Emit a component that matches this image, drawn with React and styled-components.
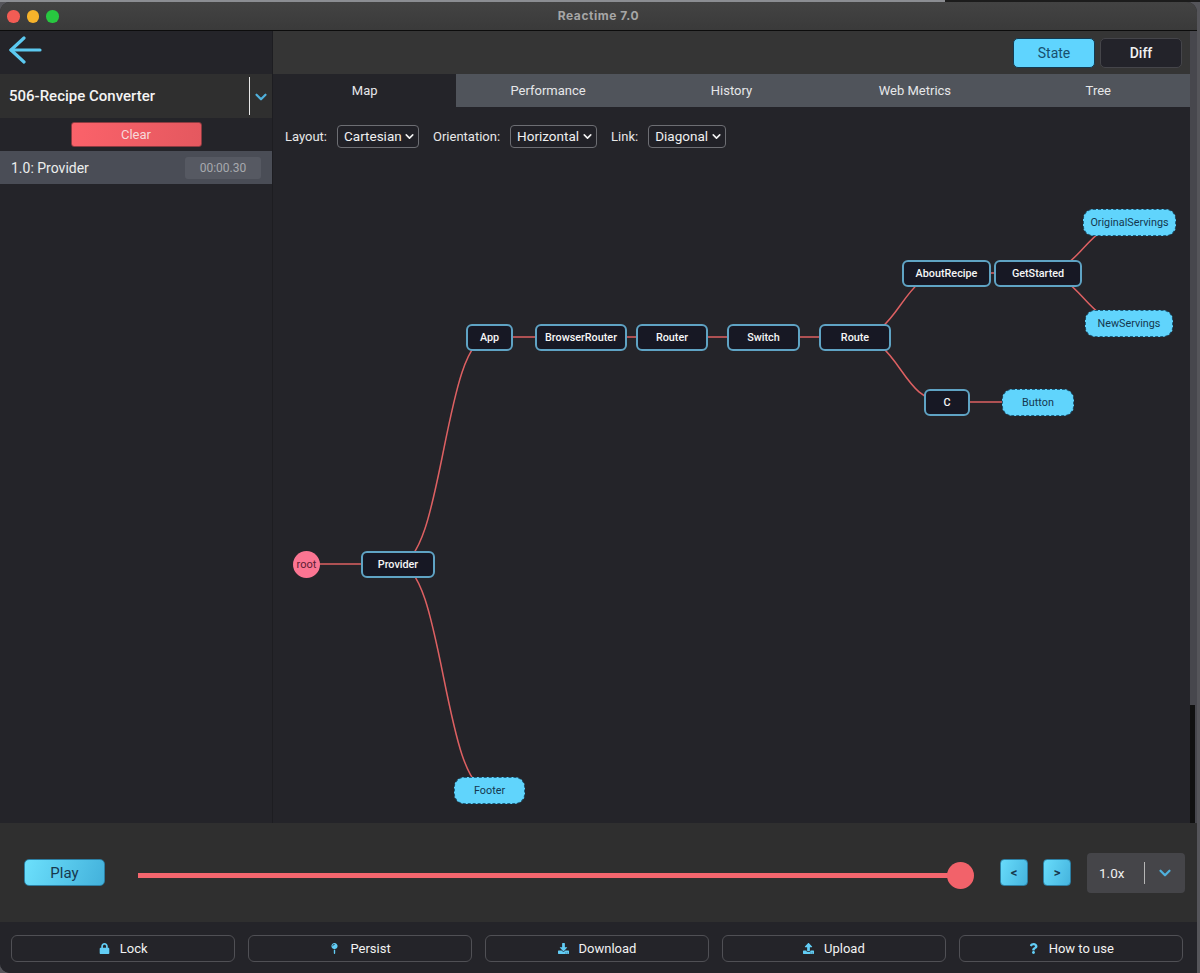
import React from "react";
import styled, { createGlobalStyle } from "styled-components";
import { ChevronDown } from "lucide-react";
import { FaLock, FaMapPin, FaDownload, FaUpload, FaQuestion } from "react-icons/fa";

const MAP_X = 273;
const MAP_Y = 158;

const nodes = [
  { name: "Provider", x: 361, y: 551, w: 74 },
  { name: "App", x: 466, y: 324, w: 47 },
  { name: "BrowserRouter", x: 535, y: 324, w: 92 },
  { name: "Router", x: 636, y: 324, w: 72 },
  { name: "Switch", x: 727, y: 324, w: 73 },
  { name: "Route", x: 819, y: 324, w: 72 },
  { name: "AboutRecipe", x: 902, y: 260, w: 89 },
  { name: "GetStarted", x: 994, y: 260, w: 88 },
  { name: "C", x: 924, y: 389, w: 46 },
  { name: "OriginalServings", x: 1083, y: 209, w: 93, leaf: true },
  { name: "NewServings", x: 1085, y: 310, w: 88, leaf: true },
  { name: "Button", x: 1002, y: 389, w: 72, leaf: true },
  { name: "Footer", x: 454, y: 777, w: 71, leaf: true },
];

const links = [
  [306, 564, 398, 564],
  [398, 564, 489, 337],
  [398, 564, 489, 790],
  [489, 337, 581, 337],
  [581, 337, 672, 337],
  [672, 337, 763, 337],
  [763, 337, 855, 337],
  [855, 337, 946, 273],
  [855, 337, 946, 402],
  [946, 273, 1038, 273],
  [1038, 273, 1129, 223],
  [1038, 273, 1129, 323],
  [946, 402, 1038, 402],
];

const linkPath = ([x1, y1, x2, y2]) => {
  const mid = (x1 + x2) / 2;
  return `M${x1 - MAP_X},${y1 - MAP_Y} C${mid - MAP_X},${y1 - MAP_Y} ${mid - MAP_X},${y2 - MAP_Y} ${x2 - MAP_X},${y2 - MAP_Y}`;
};

const tabs = ["Map", "Performance", "History", "Web Metrics", "Tree"];

const selects = [
  { label: "Layout:", value: "Cartesian", width: 82 },
  { label: "Orientation:", value: "Horizontal", width: 87 },
  { label: "Link:", value: "Diagonal", width: 78 },
];

const actions = [
  { label: "Lock", icon: <FaLock /> },
  { label: "Persist", icon: <FaMapPin /> },
  { label: "Download", icon: <FaDownload /> },
  { label: "Upload", icon: <FaUpload /> },
  { label: "How to use", icon: <FaQuestion /> },
];

const GlobalStyle = createGlobalStyle`
  html, body {
    margin: 0;
    padding: 0;
    background: #55555a;
  }
  body {
    font-family: Roboto, "Liberation Sans", sans-serif;
  }
  * {
    box-sizing: border-box;
  }
`;

const Page = styled.div`
  width: 1200px;
  height: 973px;
  padding-top: 2px;
  background: linear-gradient(90deg, #8b8d92 945px, #1c1c1c 945px) top / 100% 2px no-repeat, #55555a;
`;

const Window = styled.div`
  width: 1197px;
  height: 971px;
  display: flex;
  flex-direction: column;
  border-radius: 10px 10px 0 10px;
  overflow: hidden;
  background: #242429;
`;

const TitleBar = styled.div`
  height: 29px;
  flex-shrink: 0;
  position: relative;
  display: flex;
  align-items: center;
  justify-content: center;
  padding-bottom: 2px;
  background: linear-gradient(#434343, #3a3a3a);
  border-bottom: 1px solid #0c0c0c;
  color: #a6a6a6;
  font-family: Inter, sans-serif;
  font-size: 12px;
  font-weight: 700;
  letter-spacing: 0.55px;
`;

const Lights = styled.div`
  position: absolute;
  left: 7px;
  top: 8px;
  display: flex;
  gap: 7px;
`;

const Light = styled.span`
  width: 12.5px;
  height: 12.5px;
  border-radius: 50%;
  background: ${(p) => p.$color};
`;

const Main = styled.div`
  height: 792px;
  flex-shrink: 0;
  display: flex;
`;

const Sidebar = styled.aside`
  width: 273px;
  flex-shrink: 0;
  display: flex;
  flex-direction: column;
  background: #242429;
  border-right: 1px solid #1d1d21;
`;

const BackRow = styled.div`
  height: 43px;
  display: flex;
  align-items: center;
  padding: 0 0 5px 9px;
`;

const AppPicker = styled.div`
  height: 44px;
  display: flex;
  align-items: center;
  padding-left: 9px;
  background: #2f2f2f;
  color: #f4f4f4;
  font-size: 15px;
  font-weight: 500;
`;

const PickerName = styled.span`
  flex: 1;
`;

const Divider = styled.span`
  width: 1px;
  height: ${(p) => p.$height}px;
  background: ${(p) => p.$color};
`;

const Chevron = styled(ChevronDown)`
  color: #4fb0dc;
  flex-shrink: 0;
`;

const PickerArrow = styled.span`
  width: 22px;
  display: flex;
  justify-content: center;
  padding-top: 2px;
`;

const ClearRow = styled.div`
  height: 33px;
  display: flex;
  justify-content: center;
  padding: 4px 0 0 0;
`;

const ClearButton = styled.button`
  width: 131px;
  height: 25px;
  padding: 0;
  border: 1px solid #8c3b40;
  border-radius: 3px;
  background: linear-gradient(100deg, #fb626a, #e4585f);
  color: #f7d9da;
  font-family: inherit;
  font-size: 13px;
`;

const ActionRow = styled.div`
  height: 33px;
  display: flex;
  align-items: center;
  justify-content: space-between;
  padding: 1px 11px 0;
  background: #4a4d56;
  color: #eceded;
  font-size: 14px;
`;

const TimeTag = styled.span`
  width: 76px;
  height: 22px;
  display: flex;
  align-items: center;
  justify-content: center;
  border-radius: 3px;
  background: #565962;
  color: #a7a9ae;
  font-size: 12px;
`;

const Content = styled.section`
  flex: 1;
  display: flex;
  flex-direction: column;
  min-width: 0;
  background: #242429;
`;

const ContentHeader = styled.div`
  height: 43px;
  display: flex;
  align-items: center;
  justify-content: flex-end;
  gap: 5px;
  padding: 0 8px 0 0;
  background: #353535;
`;

const ModeButton = styled.button`
  width: 82px;
  height: 30px;
  padding: 0;
  border: 1px solid ${(p) => (p.$active ? "#123a52" : "#45454a")};
  border-radius: 5px;
  background: ${(p) => (p.$active ? "#5fd4fe" : "#23232a")};
  color: ${(p) => (p.$active ? "#17506e" : "#f2f2f2")};
  font-family: inherit;
  font-size: 14px;
  font-weight: ${(p) => (p.$active ? 400 : 500)};
`;

const Tabs = styled.nav`
  height: 33px;
  display: grid;
  grid-template-columns: repeat(5, 1fr);
  background: #50545b;
`;

const Tab = styled.div`
  display: flex;
  align-items: center;
  justify-content: center;
  padding-bottom: 1px;
  background: ${(p) => (p.$active ? "#242429" : "transparent")};
  color: #e6e7e9;
  font-size: 13px;
`;

const Controls = styled.div`
  height: 51px;
  display: flex;
  align-items: flex-start;
  padding: 18px 0 0 12px;
`;

const ControlLabel = styled.label`
  display: flex;
  align-items: center;
  margin-right: 14px;
  color: #e8e8e8;
  font-size: 13px;
  height: 23px;
`;

const SelectWrap = styled.span`
  position: relative;
  display: block;
  width: ${(p) => p.$width}px;
  margin-left: 10px;
`;

const Select = styled.select`
  appearance: none;
  display: block;
  width: 100%;
  height: 23px;
  padding: 0 0 1px 6px;
  border: 1px solid #6d6e73;
  border-radius: 4px;
  background: #212127;
  color: #f0f0f0;
  font-family: inherit;
  font-size: 13.5px;
`;

const SelectIcon = styled(ChevronDown)`
  position: absolute;
  right: 3px;
  top: 5px;
  color: #f0f0f0;
  pointer-events: none;
`;

const MapArea = styled.div`
  position: relative;
  flex: 1;
`;

const Links = styled.svg`
  position: absolute;
  inset: 0;
  width: 100%;
  height: 100%;
`;

const RootNode = styled.div`
  position: absolute;
  left: ${293 - MAP_X}px;
  top: ${551 - MAP_Y}px;
  width: 27px;
  height: 27px;
  display: flex;
  align-items: center;
  justify-content: center;
  border-radius: 50%;
  background: #fb7592;
  color: #5c1c33;
  font-size: 11px;
`;

const TreeNode = styled.div`
  position: absolute;
  left: ${(p) => p.$x - MAP_X}px;
  top: ${(p) => p.$y - MAP_Y}px;
  width: ${(p) => p.$w}px;
  height: 27px;
  display: flex;
  align-items: center;
  justify-content: center;
  border: ${(p) => (p.$leaf ? "1px dashed #1b5f80" : "2px solid #5fa3c4")};
  border-radius: ${(p) => (p.$leaf ? 10 : 6)}px;
  background: ${(p) => (p.$leaf ? "#60d4fc" : "#171824")};
  color: ${(p) => (p.$leaf ? "#14374f" : "#f6f6f6")};
  font-size: 10.8px;
  font-weight: ${(p) => (p.$leaf ? 400 : 500)};
`;

const ScrollTrack = styled.div`
  width: 7px;
  flex-shrink: 0;
  display: flex;
  flex-direction: column;
  justify-content: flex-end;
  background: #47474d;
`;

const ScrollThumb = styled.div`
  height: 118px;
  margin-right: 2px;
  background: #101010;
`;

const TravelBar = styled.div`
  height: 99px;
  flex-shrink: 0;
  display: flex;
  align-items: center;
  padding: 0 12px 0 24px;
  background: #2f2f2f;
`;

const PlayButton = styled.button`
  width: 81px;
  height: 27px;
  padding: 0;
  margin-right: 33px;
  border: 1px solid #2c7fa3;
  border-radius: 5px;
  background: linear-gradient(110deg, #6ce0fc, #43b1db);
  color: #17384e;
  font-family: inherit;
  font-size: 15px;
`;

const SliderTrack = styled.div`
  position: relative;
  flex: 1;
  height: 5px;
  margin: 5px 40px 0 0;
  background: #f5666e;
`;

const SliderThumb = styled.div`
  position: absolute;
  right: -14px;
  top: -11px;
  width: 27px;
  height: 27px;
  border-radius: 50%;
  background: #f2626a;
`;

const StepButton = styled.button`
  width: 28px;
  height: 27px;
  padding: 0;
  margin-right: ${(p) => p.$gap}px;
  border: 1px solid #2c7fa3;
  border-radius: 4px;
  background: linear-gradient(110deg, #68dcfb, #45b4de);
  color: #17384e;
  font-family: inherit;
  font-size: 13px;
  font-weight: 700;
`;

const SpeedPicker = styled.div`
  width: 98px;
  height: 40px;
  display: flex;
  align-items: center;
  padding-left: 12px;
  border-radius: 4px;
  background: #454549;
  color: #efefef;
  font-size: 13.5px;
`;

const SpeedValue = styled.span`
  width: 45px;
`;

const SpeedArrow = styled.span`
  flex: 1;
  display: flex;
  justify-content: center;
`;

const ButtonBar = styled.div`
  flex: 1;
  display: grid;
  grid-template-columns: repeat(5, 1fr);
  gap: 12.5px;
  padding: 13px 14px 11px 11px;
  background: #242429;
`;

const BarButton = styled.button`
  display: flex;
  align-items: center;
  justify-content: center;
  gap: 10px;
  padding: 0;
  border: 1px solid #505055;
  border-radius: 6px;
  background: transparent;
  color: #f2f2f2;
  font-family: inherit;
  font-size: 13px;
  svg {
    color: #62cdf5;
    font-size: 11px;
  }
`;

export default function App() {
  return (
    <>
      <GlobalStyle />
      <Page>
        <Window>
          <TitleBar>
            <Lights>
              <Light $color="#f25c54" />
              <Light $color="#f7b32b" />
              <Light $color="#28c840" />
            </Lights>
            Reactime 7.0
          </TitleBar>

          <Main>
            <Sidebar>
              <BackRow>
                <svg width="33" height="28" viewBox="0 0 33 28" fill="none" stroke="#5cc9f0" strokeWidth="3.2" strokeLinecap="round" strokeLinejoin="round">
                  <path d="M2 14 H31" />
                  <path d="M15 2 L2 14 L15 26" />
                </svg>
              </BackRow>
              <AppPicker>
                <PickerName>506-Recipe Converter</PickerName>
                <Divider $height={38} $color="#e8e8e8" />
                <PickerArrow>
                  <Chevron size={18} strokeWidth={3} />
                </PickerArrow>
              </AppPicker>
              <ClearRow>
                <ClearButton>Clear</ClearButton>
              </ClearRow>
              <ActionRow>
                1.0: Provider
                <TimeTag>00:00.30</TimeTag>
              </ActionRow>
            </Sidebar>

            <Content>
              <ContentHeader>
                <ModeButton $active>State</ModeButton>
                <ModeButton>Diff</ModeButton>
              </ContentHeader>
              <Tabs>
                {tabs.map((tab) => (
                  <Tab key={tab} $active={tab === "Map"}>
                    {tab}
                  </Tab>
                ))}
              </Tabs>
              <Controls>
                {selects.map((s) => (
                  <ControlLabel key={s.label}>
                    {s.label}
                    <SelectWrap $width={s.width}>
                      <Select defaultValue={s.value}>
                        <option>{s.value}</option>
                      </Select>
                      <SelectIcon size={13} strokeWidth={3} />
                    </SelectWrap>
                  </ControlLabel>
                ))}
              </Controls>
              <MapArea>
                <Links>
                  {links.map((link, i) => (
                    <path key={i} d={linkPath(link)} fill="none" stroke="#dd6062" strokeWidth="1.5" />
                  ))}
                </Links>
                <RootNode>root</RootNode>
                {nodes.map((n) => (
                  <TreeNode key={n.name} $x={n.x} $y={n.y} $w={n.w} $leaf={n.leaf}>
                    {n.name}
                  </TreeNode>
                ))}
              </MapArea>
            </Content>

            <ScrollTrack>
              <ScrollThumb />
            </ScrollTrack>
          </Main>

          <TravelBar>
            <PlayButton>Play</PlayButton>
            <SliderTrack>
              <SliderThumb />
            </SliderTrack>
            <StepButton $gap={15}>&lt;</StepButton>
            <StepButton $gap={16}>&gt;</StepButton>
            <SpeedPicker>
              <SpeedValue>1.0x</SpeedValue>
              <Divider $height={22} $color="#b5b5b5" />
              <SpeedArrow>
                <Chevron size={18} strokeWidth={3} />
              </SpeedArrow>
            </SpeedPicker>
          </TravelBar>

          <ButtonBar>
            {actions.map((a) => (
              <BarButton key={a.label}>
                {a.icon}
                {a.label}
              </BarButton>
            ))}
          </ButtonBar>
        </Window>
      </Page>
    </>
  );
}
